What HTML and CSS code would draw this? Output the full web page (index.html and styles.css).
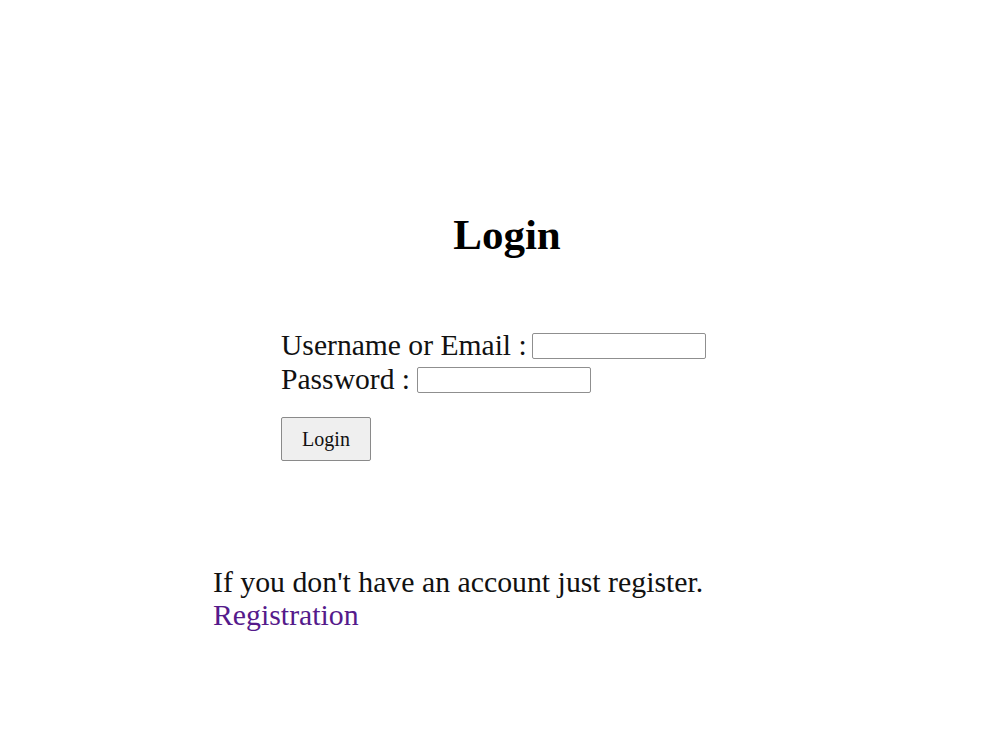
FILE: index.html
```html
<!DOCTYPE html>
<html lang="en">
<head>
    <meta charset="UTF-8">
    <meta name="viewport" content="width=device-width, initial-scale=1.0">
    <title>Login</title>
    <link rel="stylesheet" href="styles.css">
</head>
<body>
    <div class="page">
        <h1 class="title">Login</h1>
        <form class="login-form" onsubmit="event.preventDefault()">
            <div class="row">
                <label for="user">Username or Email :</label><input type="text" id="user" class="field field-user">
            </div>
            <div class="row">
                <label for="pass">Password :</label><input type="password" id="pass" class="field field-pass">
            </div>
            <button type="submit" class="btn">Login</button>
        </form>
        <div class="note">
            <p>If you don't have an account just register.</p>
            <a href="#" class="reg-link">Registration</a>
        </div>
    </div>
</body>
</html>
```

FILE: styles.css
```css
* {
    margin: 0;
    padding: 0;
    box-sizing: border-box;
}

body {
    font-family: "Liberation Serif", "Times New Roman", serif;
    color: #111;
    background: #fff;
}

.page {
    padding-top: 210px;
}

.title {
    text-align: center;
    padding-left: 14px;
    font-size: 43px;
    line-height: 50px;
    font-weight: bold;
    color: #000;
}

.login-form {
    margin-top: 68px;
    padding-left: 281px;
}

.row {
    font-size: 29.6px;
    line-height: 34px;
    height: 34px;
    white-space: nowrap;
}

.field {
    vertical-align: top;
    margin-top: 5px;
    width: 174px;
    height: 26px;
    border: 1px solid #8f8f8f;
    border-radius: 2px;
    background: #fff;
    font-size: 13px;
    padding: 1px 3px;
}

.field-user {
    margin-left: 5px;
}

.field-pass {
    margin-left: 7px;
}

.btn {
    margin-top: 21px;
    width: 90px;
    height: 44px;
    font-family: "Liberation Serif", "Times New Roman", serif;
    font-size: 20px;
    color: #111;
    background: #efefef;
    border: 1px solid #8a8a8a;
    border-radius: 2px;
    cursor: pointer;
}

.note {
    margin-top: 104px;
    padding-left: 213px;
    font-size: 29.8px;
    line-height: 33px;
}

.reg-link {
    color: #551a8b;
    text-decoration: none;
}
```
